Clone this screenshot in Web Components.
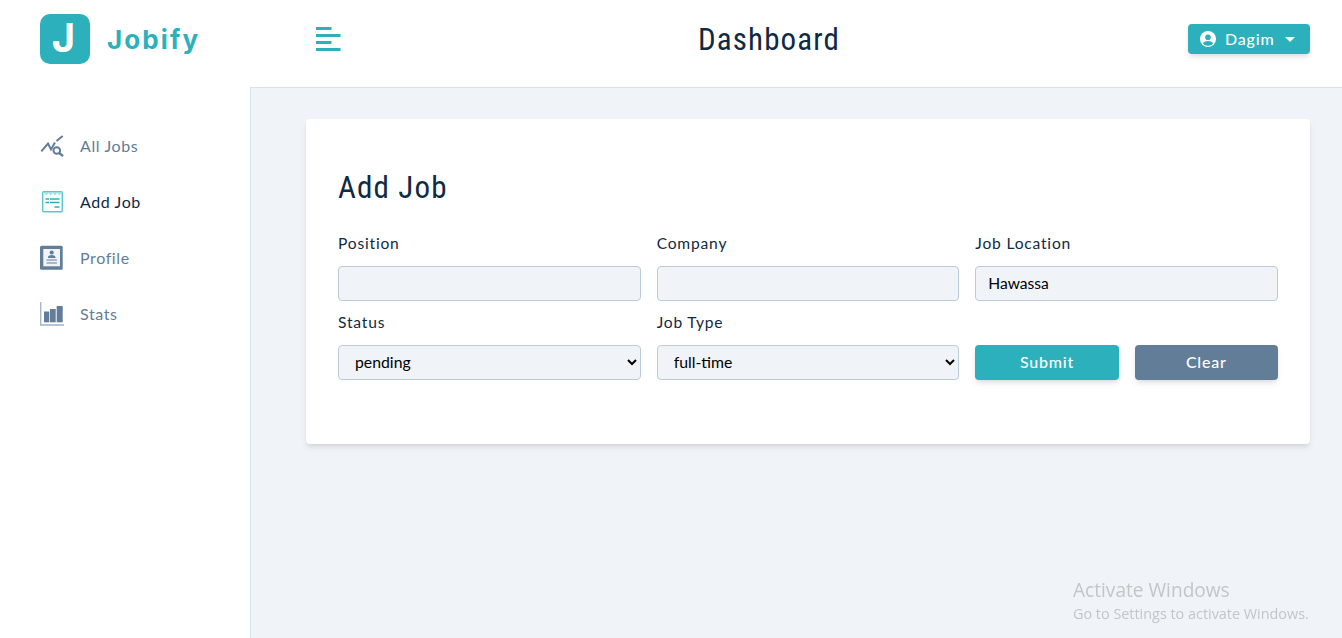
<!DOCTYPE html>
<html lang="en">
<head>
<meta charset="utf-8">
<title>Jobify</title>
<style>
  html, body { margin: 0; height: 100%; }
  body { font-family: Lato, "Open Sans", sans-serif; color: #102a43; background: #fff; overflow: hidden; }
</style>
</head>
<body>
<dash-shell>
  <side-bar slot="side">
    <nav-link icon="jobs">All Jobs</nav-link>
    <nav-link icon="add" active>Add Job</nav-link>
    <nav-link icon="profile">Profile</nav-link>
    <nav-link icon="stats">Stats</nav-link>
  </side-bar>
  <top-bar slot="top"></top-bar>
  <add-job-card></add-job-card>
</dash-shell>
<activate-mark></activate-mark>

<script>
const ICONS = {
  jobs: `<svg width="24" height="26" viewBox="0 0 24 26" fill="none" stroke="#627d98" stroke-width="2">
      <path d="M1.300 18.300 8 10.500l3 6 4-7"/><path d="M16.500 8 22.700 3"/>
      <circle cx="16.800" cy="17.500" r="3.300"/><path d="m19.300 20 3.700 3.200" stroke-width="2.400"/></svg>`,
  add: `<svg width="24" height="26" viewBox="0 0 24 26" fill="none">
      <rect x="2.700" y="2.700" width="19.600" height="20" rx="1" stroke="#2cb1bc" stroke-width="1.500" stroke-opacity=".75"/>
      <path d="M3 3h19l-2.500 3.400-2.300-2.400-2.200 2.400L12.800 4l-2.200 2.400L8.400 4 6.200 6.400z" fill="#a2e0e4"/>
      <path d="M5.500 10h3.500M10 10h9.500M5.500 13.500h3.500M10 13.500h9.500M14.500 18h5" stroke="#2cb1bc" stroke-width="1.600"/></svg>`,
  profile: `<svg width="24" height="26" viewBox="0 0 24 26" fill="none">
      <rect x="0" y=".700" width="22.700" height="24" rx="1.500" fill="#627d98"/>
      <rect x="3.300" y="4" width="16.700" height="17.300" fill="#f0f4f8"/>
      <circle cx="11.700" cy="7.500" r="2.100" fill="#627d98"/>
      <path d="M7.800 13c0-2.200 1.700-3 3.900-3s3.900.8 3.900 3z" fill="#627d98"/>
      <path d="M6.500 15h10.400M6.500 18h10.400" stroke="#627d98" stroke-width="1.200"/></svg>`,
  stats: `<svg width="24" height="26" viewBox="0 0 24 26" fill="none">
      <path d="M.700 1v23h23.300" stroke="#9fb3c8" stroke-width="1.300"/>
      <rect x="4" y="10.500" width="5.300" height="10.800" fill="#627d98"/>
      <rect x="10" y="8" width="5.700" height="13.300" fill="#627d98"/>
      <rect x="16.700" y="5" width="6" height="16.300" fill="#627d98"/></svg>`
};

customElements.define("dash-shell", class extends HTMLElement {
  constructor() {
    super();
    this.attachShadow({ mode: "open" }).innerHTML = `
      <style>
        :host { display: grid; grid-template-columns: 251px 1fr; grid-template-rows: 87px 1fr; height: 100vh; }
        .side { grid-row: 1 / span 2; display: flex; }
        main { background: #f0f4f8; border-top: 1px solid #d9e2ec; padding: 31px 32px 0 55px; min-height: 0; }
      </style>
      <div class="side"><slot name="side"></slot></div>
      <div><slot name="top"></slot></div>
      <main><slot></slot></main>`;
  }
});

customElements.define("side-bar", class extends HTMLElement {
  constructor() {
    super();
    this.attachShadow({ mode: "open" }).innerHTML = `
      <style>
        :host { display: flex; flex-direction: column; flex: 1; height: 100vh; box-sizing: border-box; background: #fff; }
        .logo { display: flex; align-items: center; gap: 17px; height: 78px; padding-left: 40px; }
        .badge { width: 50px; height: 50px; box-sizing: border-box; padding: 0 3px 3px 0; border-radius: 10px; background: #2cb1bc; color: #fff;
          display: flex; align-items: center; justify-content: center;
          font: 700 40px Inter, Roboto, sans-serif; }
        .name { font: 700 26px Inter, Roboto, sans-serif; letter-spacing: 2.100px; color: #2cb1bc; }
        nav { flex: 1; display: flex; flex-direction: column; margin-top: 9px; padding-top: 31px; border-right: 1px solid #d9e2ec; }
      </style>
      <div class="logo"><span class="badge">J</span><span class="name">Jobify</span></div>
      <nav><slot></slot></nav>`;
  }
});

customElements.define("nav-link", class extends HTMLElement {
  constructor() {
    super();
    const icon = ICONS[this.getAttribute("icon")];
    this.attachShadow({ mode: "open" }).innerHTML = `
      <style>
        :host { display: flex; align-items: center; gap: 16px; height: 56px; padding-left: 40px;
          font-size: 16px; letter-spacing: 0.6px; color: #627d98; }
        :host([active]) { color: #102a43; }
        svg { display: block; }
        .i { width: 24px; height: 26px; }
        .t { padding-bottom: 2px; }
      </style>
      <span class="i">${icon}</span><span class="t"><slot></slot></span>`;
  }
});

customElements.define("top-bar", class extends HTMLElement {
  constructor() {
    super();
    this.attachShadow({ mode: "open" }).innerHTML = `
      <style>
        :host { display: flex; align-items: center; justify-content: space-between; height: 78px;
          padding: 0 32px 0 64px; background: #fff; }
        .toggle { display: block; }
        h2 { margin: 0 0 0 9px; font: 400 31px "Roboto Condensed", Roboto, sans-serif; font-stretch: 75%;
          letter-spacing: 1.150px; color: #102a43; }
        .user { display: flex; align-items: center; gap: 9px; height: 30px; box-sizing: border-box; padding: 0 12px;
          width: 122px; border-radius: 4px; background: #2cb1bc; color: #fff; font-size: 16px; letter-spacing: 0.8px; font-weight: 500;
          box-shadow: 0 4px 6px -1px rgba(0,0,0,.1), 0 2px 4px -1px rgba(0,0,0,.06); }
        .user span:first-of-type { padding-bottom: 2px; }
        .caret { width: 0; height: 0; margin-left: 2px; border: 5px solid transparent; border-top-color: #fff; border-bottom: 0; }
      </style>
      <svg class="toggle" width="26" height="24" viewBox="0 0 26 24" fill="#2cb1bc">
        <rect x="1" y="0" width="15.500" height="3"/><rect x="1" y="7" width="24.500" height="3"/>
        <rect x="1" y="14" width="15.500" height="3"/><rect x="1" y="21" width="24.500" height="3"/>
      </svg>
      <h2>Dashboard</h2>
      <div class="user">
        <svg width="16" height="16" viewBox="0 0 16 16"><circle cx="8" cy="8" r="8" fill="#fff"/>
          <circle cx="8" cy="6.200" r="2.800" fill="#2cb1bc"/>
          <path d="M2.800 12.500c1-2 3-2.600 5.200-2.600s4.200.6 5.200 2.600A6.500 6.500 0 0 1 8 14.800a6.500 6.500 0 0 1-5.200-2.300z" fill="#2cb1bc"/></svg>
        <span>Dagim</span><span class="caret"></span>
      </div>`;
  }
});

customElements.define("form-field", class extends HTMLElement {
  constructor() {
    super();
    const label = this.getAttribute("label");
    this.attachShadow({ mode: "open" }).innerHTML = `
      <style>
        :host { display: block; }
        label { display: block; height: 24px; margin-bottom: 11px; font-size: 15.6px; line-height: 24px; letter-spacing: 0.8px; color: #102a43; }
      </style>
      <label>${label}</label><slot></slot>`;
  }
});

customElements.define("add-job-card", class extends HTMLElement {
  constructor() {
    super();
    const select = (opts) => `<select>${opts.map(o => `<option>${o}</option>`).join("")}</select>`;
    this.attachShadow({ mode: "open" }).innerHTML = `
      <style>
        :host { display: block; box-sizing: border-box; height: 325px; padding: 48px 32px 0; background: #fff; border-radius: 4px;
          box-shadow: 0 4px 6px -1px rgba(0,0,0,.1), 0 2px 4px -1px rgba(0,0,0,.06); }
        h3 { margin: 0 0 23px; padding-top: 1px; font: 400 31px/40px "Roboto Condensed", Roboto, sans-serif; font-stretch: 75%; letter-spacing: 1.150px; color: #102a43; }
        .grid { display: grid; grid-template-columns: repeat(3, 1fr); column-gap: 16px; row-gap: 9px; }
        input, select { display: block; width: 100%; height: 35px; box-sizing: border-box; margin: 0; background: #f0f4f8;
          border: 1px solid #bcccdc; border-radius: 4px; color: #000; font: 15.6px Lato, sans-serif; padding: 0 12px 2px; }
        select { font-size: 15.8px; }
        .btns { display: grid; grid-template-columns: 1fr 1fr; column-gap: 16px; align-self: end; }
        button { height: 35px; border: 0; border-radius: 4px; padding: 0 0 3px; color: #fff; font: 500 16px Lato, sans-serif; letter-spacing: 0.8px;
          box-shadow: 0 4px 6px -1px rgba(0,0,0,.1), 0 2px 4px -1px rgba(0,0,0,.06); }
        .submit { background: #2cb1bc; }
        .clear { background: #627d98; }
      </style>
      <h3>Add Job</h3>
      <div class="grid">
        <form-field label="Position"><input type="text"></form-field>
        <form-field label="Company"><input type="text"></form-field>
        <form-field label="Job Location"><input type="text" value="Hawassa"></form-field>
        <form-field label="Status">${select(["pending", "interview", "declined"])}</form-field>
        <form-field label="Job Type">${select(["full-time", "part-time", "remote", "internship"])}</form-field>
        <div class="btns"><button class="submit">Submit</button><button class="clear">Clear</button></div>
      </div>`;
  }
});

// windows watermark sits over the page
customElements.define("activate-mark", class extends HTMLElement {
  constructor() {
    super();
    this.attachShadow({ mode: "open" }).innerHTML = `
      <style>
        :host { position: fixed; left: 1073px; top: 578px; color: #c3c6c9; font-family: "Open Sans", sans-serif; white-space: nowrap; }
        div { font-size: 19.100px; line-height: 25px; }
        small { display: block; margin-top: 1px; font-size: 14.400px; line-height: 20px; }
      </style>
      <div>Activate Windows</div><small>Go to Settings to activate Windows.</small>`;
  }
});
</script>
</body>
</html>
